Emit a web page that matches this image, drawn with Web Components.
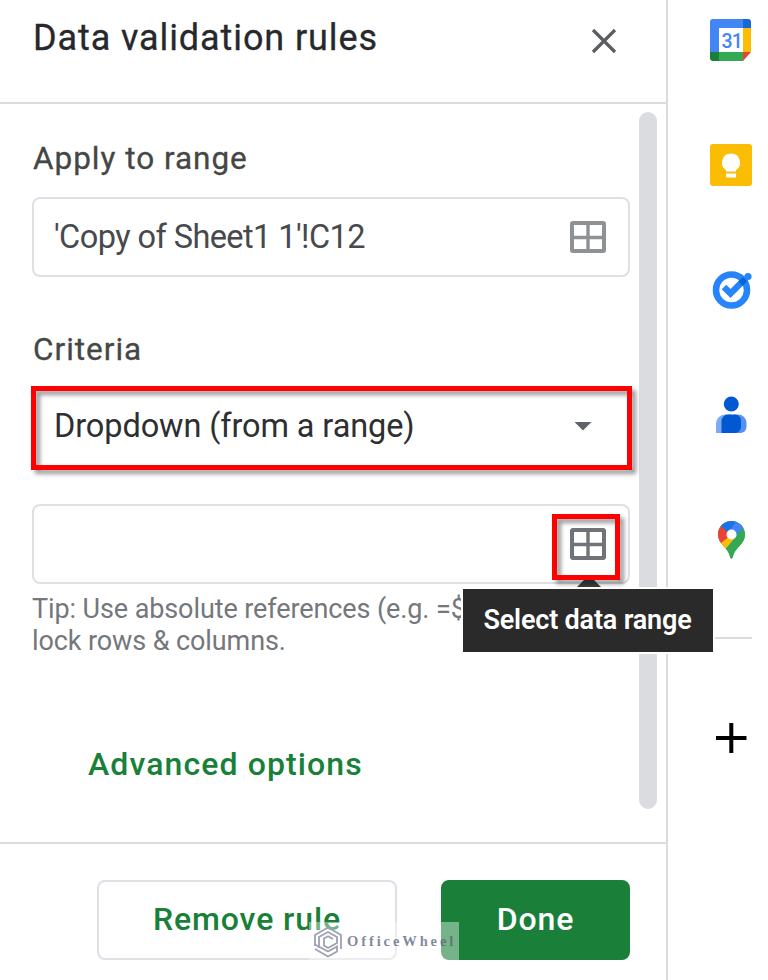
<!DOCTYPE html>
<html lang="en">
<head>
<meta charset="utf-8">
<title>Data validation rules</title>
<style>
  body {
    margin: 0;
    width: 768px;
    height: 980px;
    overflow: hidden;
    background: #fff;
    font-family: Roboto, sans-serif;
  }
</style>
</head>
<body>
<sheet-app></sheet-app>

<script>
class GridIcon extends HTMLElement {
  constructor() {
    super();
    this.attachShadow({ mode: "open" });
    this.shadowRoot.innerHTML = `
      <style>
        :host { display: block; width: 36px; height: 32px; color: #8f9295; }
        svg { display: block; }
      </style>
      <svg width="36" height="32" viewBox="0 0 36 32" fill="none" stroke="currentColor">
        <rect x="2" y="2" width="32" height="28" rx="1" stroke-width="4"/>
        <path d="M18 2v28M2 16.500h32" stroke-width="3.400"/>
      </svg>
    `;
  }
}

class FieldLabel extends HTMLElement {
  constructor() {
    super();
    this.attachShadow({ mode: "open" });
    this.shadowRoot.innerHTML = `
      <style>
        :host {
          display: block;
          height: 36px;
          padding-left: 1px;
          line-height: 36px;
          font-size: 31.5px;
          letter-spacing: 0.98px;
          -webkit-text-stroke: 0.3px currentColor;
          color: #444746;
          white-space: nowrap;
        }
      </style>
      <slot></slot>
    `;
  }
}

class RangeField extends HTMLElement {
  constructor() {
    super();
    this.attachShadow({ mode: "open" });
    this.shadowRoot.innerHTML = `
      <style>
        :host {
          display: flex;
          position: relative;
          box-sizing: border-box;
          height: 80px;
          align-items: center;
          justify-content: space-between;
          padding: 0 22px 0 20px;
          border: 2px solid #dfe0e5;
          border-radius: 8px;
          font-size: 32.5px;
          letter-spacing: -0.57px;
          color: #47494c;
          white-space: nowrap;
        }
      </style>
      <span><slot></slot></span>
      <slot name="icon"></slot>
    `;
  }
}

class CriteriaSelect extends HTMLElement {
  constructor() {
    super();
    this.attachShadow({ mode: "open" });
    this.shadowRoot.innerHTML = `
      <style>
        :host {
          display: flex;
          position: relative;
          box-sizing: border-box;
          height: 80px;
          align-items: center;
          justify-content: space-between;
          padding: 0 38px 2px 22px;
          font-size: 32.5px;
          letter-spacing: -0.1px;
          color: #2d2f31;
          white-space: nowrap;
        }
        .arrow {
          width: 18px;
          height: 9px;
          background: #5f6368;
          clip-path: polygon(0 0, 100% 0, 50% 100%);
        }
      </style>
      <span><slot></slot></span>
      <div class="arrow"></div>
      <slot name="mark"></slot>
    `;
  }
}

/* red frame laid over a control */
class HighlightBox extends HTMLElement {
  constructor() {
    super();
    this.attachShadow({ mode: "open" });
    this.shadowRoot.innerHTML = `
      <style>
        :host {
          display: block;
          position: absolute;
          box-sizing: border-box;
          border: 5px solid #f00;
          filter: drop-shadow(4px 4px 2px rgba(0, 0, 0, 0.4));
          z-index: 2;
        }
      </style>
    `;
  }
}

class HintTooltip extends HTMLElement {
  constructor() {
    super();
    this.attachShadow({ mode: "open" });
    this.shadowRoot.innerHTML = `
      <style>
        :host {
          display: block;
          position: absolute;
          z-index: 1;
        }
        .arrow {
          width: 24px;
          height: 12px;
          margin-left: 116px;
          background: #3f3f3f;
          clip-path: polygon(50% 0, 100% 100%, 0 100%);
        }
        .box {
          width: 250px;
          height: 63px;
          border: 2px solid #fff;
          background: #2a2a2a;
          background-clip: padding-box;
          color: #fff;
          font-size: 27px;
          font-weight: 600;
          line-height: 62px;
          letter-spacing: -0.18px;
          text-align: center;
          text-indent: -1px;
          white-space: nowrap;
        }
      </style>
      <div class="arrow"></div>
      <div class="box"><slot></slot></div>
    `;
  }
}

class DialogButton extends HTMLElement {
  constructor() {
    super();
    this.attachShadow({ mode: "open" });
    this.shadowRoot.innerHTML = `
      <style>
        :host {
          display: block;
          box-sizing: border-box;
          width: 300px;
          height: 80px;
          border: 2px solid #dfe0e5;
          border-radius: 8px;
          color: #188038;
          font-size: 32px;
          font-weight: 500;
          line-height: 75px;
          letter-spacing: 0.9px;
          text-align: center;
          white-space: nowrap;
        }
        :host([primary]) {
          width: 189px;
          border-color: #1a8039;
          background: #1a8039;
          color: #fff;
        }
      </style>
      <slot></slot>
    `;
  }
}

class WheelMark extends HTMLElement {
  constructor() {
    super();
    this.attachShadow({ mode: "open" });
    this.shadowRoot.innerHTML = `
      <style>
        :host {
          display: flex;
          position: absolute;
          width: 150px;
          height: 38px;
          align-items: center;
          background: rgba(255, 255, 255, 0.4);
          color: rgba(90, 98, 122, 0.75);
          font: 700 14.5px/40px "Liberation Serif", serif;
          letter-spacing: 2.9px;
          white-space: nowrap;
        }
        svg { flex: none; margin: 2px 4px 0 4px; }
      </style>
      <svg width="30" height="32" viewBox="0 0 30 32" fill="none" stroke="#9da1b1" stroke-width="1.800">
        <path d="M2 20V9L15 1.500 28 9v14"/>
        <path d="M6 22V11l9-5 9 5v6l-9 5-4-2.500v-7l4-2.300 5 2.800"/>
        <path d="M2 23l13 7.500 9-5v-5l-9 5-13-7"/>
      </svg>
      <span>OfficeWheel</span>
    `;
  }
}

class ValidationPanel extends HTMLElement {
  constructor() {
    super();
    this.attachShadow({ mode: "open" });
    this.shadowRoot.innerHTML = `
      <style>
        :host {
          display: flex;
          flex-direction: column;
          position: relative;
          width: 666px;
          height: 980px;
          border-right: 2px solid #dadce0;
        }
        header {
          display: flex;
          box-sizing: border-box;
          height: 104px;
          justify-content: space-between;
          padding: 17px 49px 0 33px;
          border-bottom: 2px solid #dadce0;
        }
        h1 {
          margin: 0;
          font-size: 36px;
          font-weight: 400;
          line-height: 42px;
          letter-spacing: 0.9px;
          -webkit-text-stroke: 0.3px currentColor;
          color: #27282c;
          white-space: nowrap;
        }
        header svg { margin-top: 11px; }
        main {
          display: flex;
          height: 738px;
          justify-content: space-between;
        }
        form {
          display: flex;
          flex-direction: column;
          width: 598px;
          padding: 37px 0 0 32px;
        }
        .range { margin-top: 20px; }
        .criteria { margin-top: 55px; }
        criteria-select { margin-top: 19px; }
        .source { margin-top: 37px; }
        .source grid-icon { color: #707478; }
        p {
          margin: 9px 0 0;
          font-size: 27px;
          line-height: 32px;
          letter-spacing: -0.1px;
          color: #74777b;
          white-space: nowrap;
        }
        .advanced {
          margin: 88px 0 0 56px;
          color: #188038;
          font-size: 32px;
          font-weight: 500;
          line-height: 38px;
          letter-spacing: 1.1px;
        }
        .scrollbar {
          width: 18px;
          height: 697px;
          margin: 8px 9px 0 0;
          border-radius: 9px;
          background: #dadce0;
        }
        footer {
          display: flex;
          flex: 1;
          justify-content: flex-end;
          align-items: flex-start;
          gap: 44px;
          padding: 36px 36px 0 0;
          border-top: 2px solid #dadce0;
        }
      </style>
      <header>
        <h1>Data validation rules</h1>
        <svg width="26" height="26" viewBox="0 0 26 26" stroke="#5a5d61" stroke-width="3.200">
          <path d="M2 2l22 22M24 2L2 24"/>
        </svg>
      </header>
      <main>
        <form>
          <field-label>Apply to range</field-label>
          <range-field class="range">'Copy of Sheet1 1'!C12<grid-icon slot="icon"></grid-icon></range-field>
          <field-label class="criteria">Criteria</field-label>
          <criteria-select>
            Dropdown (from a range)
            <highlight-box slot="mark" style="inset: -1px -2px -3px -1px"></highlight-box>
          </criteria-select>
          <range-field class="source">
            <grid-icon slot="icon"></grid-icon>
            <highlight-box slot="icon" style="top: 8px; right: 8px; width: 68px; height: 66px"></highlight-box>
            <hint-tooltip slot="icon" style="top: 69px; left: 427px">Select data range</hint-tooltip>
          </range-field>
          <p>Tip: Use absolute references (e.g. =$<br>lock rows &amp; columns.</p>
          <div class="advanced">Advanced options</div>
        </form>
        <div class="scrollbar"></div>
      </main>
      <footer>
        <dialog-button>Remove rule</dialog-button>
        <dialog-button primary>Done</dialog-button>
      </footer>
      <wheel-mark style="left: 309px; top: 922px"></wheel-mark>
    `;
  }
}

class SideRail extends HTMLElement {
  constructor() {
    super();
    this.attachShadow({ mode: "open" });
    this.shadowRoot.innerHTML = `
      <style>
        :host {
          display: flex;
          flex-direction: column;
          box-sizing: border-box;
          width: 100px;
          align-items: center;
          padding: 19px 0 0 26px;
        }
        svg { display: block; flex: none; width: 42px; height: 42px; margin-bottom: 83px; }
        hr {
          width: 42px;
          height: 2px;
          margin: -7px 0 78px;
          border: 0;
          background: #dadce0;
        }
      </style>
      <svg viewBox="0 0 42 42">
        <path fill="#4285f4" d="M3 0h30v9H9v24H0V3a3 3 0 0 1 3-3z"/>
        <path fill="#1967d2" d="M33 0h5a3 3 0 0 1 3 3v6h-8z"/>
        <path fill="#fbbc04" d="M33 9h8v24h-8z"/>
        <path fill="#34a853" d="M9 33h24v9H9z"/>
        <path fill="#188038" d="M0 33h9v9H3a3 3 0 0 1-3-3z"/>
        <path fill="#ea4335" d="M33 33h8l-8 9z"/>
        <text x="21.800" y="28.500" font-family="Roboto, sans-serif" font-size="19.500" font-weight="500" fill="#4285f4" text-anchor="middle" letter-spacing="-0.700">31</text>
      </svg>
      <svg viewBox="0 0 42 42">
        <rect width="42" height="42" rx="3" fill="#fbbc04"/>
        <path fill="#fff" d="M21 9.500a9 9 0 0 1 5 16.500v1.500H16V26a9 9 0 0 1 5-16.500zM16 29.500h10v4H16z"/>
      </svg>
      <svg viewBox="0 0 42 42">
        <circle cx="21.500" cy="21" r="15.500" fill="none" stroke="#2684fc" stroke-width="6.600"/>
        <path d="M14 18l6.500 6.500L36 9" fill="none" stroke="#2684fc" stroke-width="6.400"/>
        <circle cx="38" cy="7.500" r="3.600" fill="#2684fc"/>
        <path fill="#0066da" d="M28.500 12.500l4.500-4.500a18 18 0 0 1 4 4.500l-4.500 4.500z"/>
      </svg>
      <svg viewBox="0 0 42 42">
        <circle cx="21.300" cy="10" r="7.500" fill="#0059d0"/>
        <path fill="#7baaf7" d="M15 20.500h6V39H6v-9.500a9 9 0 0 1 9-9z"/>
        <path fill="#5491f5" d="M24 20.500h4a8.500 8.500 0 0 1 8.500 8.500v4a6 6 0 0 1-6 6H24z"/>
        <path fill="#0059d0" d="M18 20.500h7a6 6 0 0 1 6 6V33a6 6 0 0 1-6 6H11.500V27a6.500 6.500 0 0 1 6.500-6.500z"/>
      </svg>
      <svg viewBox="0 0 42 42">
        <clipPath id="pin"><path d="M21.500 2C14 2 8 7.500 8 15.500c0 10 10.500 13 12 22 .5 3 2.500 3 3 0 1.500-9 12-12 12-22C35 7.500 29 2 21.500 2z"/></clipPath>
        <g clip-path="url(#pin)">
          <path fill="#34a853" d="M0 0h42v42H0z"/>
          <path fill="#fbbc04" d="M6 26L21.500 8l7 12.500L14.500 32z"/>
          <path fill="#ea4335" d="M5 3l16.500 12.500L10.500 24.500 5 22z"/>
          <path fill="#1a73e8" d="M11.500 7.500l-2-2L15-1h14l-9 16.500z"/>
          <path fill="#4285f4" d="M27 1l9 5.500L22.500 20.500 19 13z"/>
          <path fill="#34a853" d="M33 9.500L14.500 31l6 9 18-20z"/>
        </g>
        <circle cx="21.500" cy="15.500" r="5" fill="#fff"/>
      </svg>
      <hr>
      <svg viewBox="0 0 42 42" stroke="#000" stroke-width="4">
        <path d="M21.300 6v30M6 21h30.500"/>
      </svg>
    `;
  }
}

class SheetApp extends HTMLElement {
  constructor() {
    super();
    this.attachShadow({ mode: "open" });
    this.shadowRoot.innerHTML = `
      <style>
        :host {
          display: flex;
          width: 768px;
          height: 980px;
        }
      </style>
      <validation-panel></validation-panel>
      <side-rail></side-rail>
    `;
  }
}

customElements.define("grid-icon", GridIcon);
customElements.define("field-label", FieldLabel);
customElements.define("range-field", RangeField);
customElements.define("criteria-select", CriteriaSelect);
customElements.define("highlight-box", HighlightBox);
customElements.define("hint-tooltip", HintTooltip);
customElements.define("dialog-button", DialogButton);
customElements.define("wheel-mark", WheelMark);
customElements.define("validation-panel", ValidationPanel);
customElements.define("side-rail", SideRail);
customElements.define("sheet-app", SheetApp);
</script>
</body>
</html>
